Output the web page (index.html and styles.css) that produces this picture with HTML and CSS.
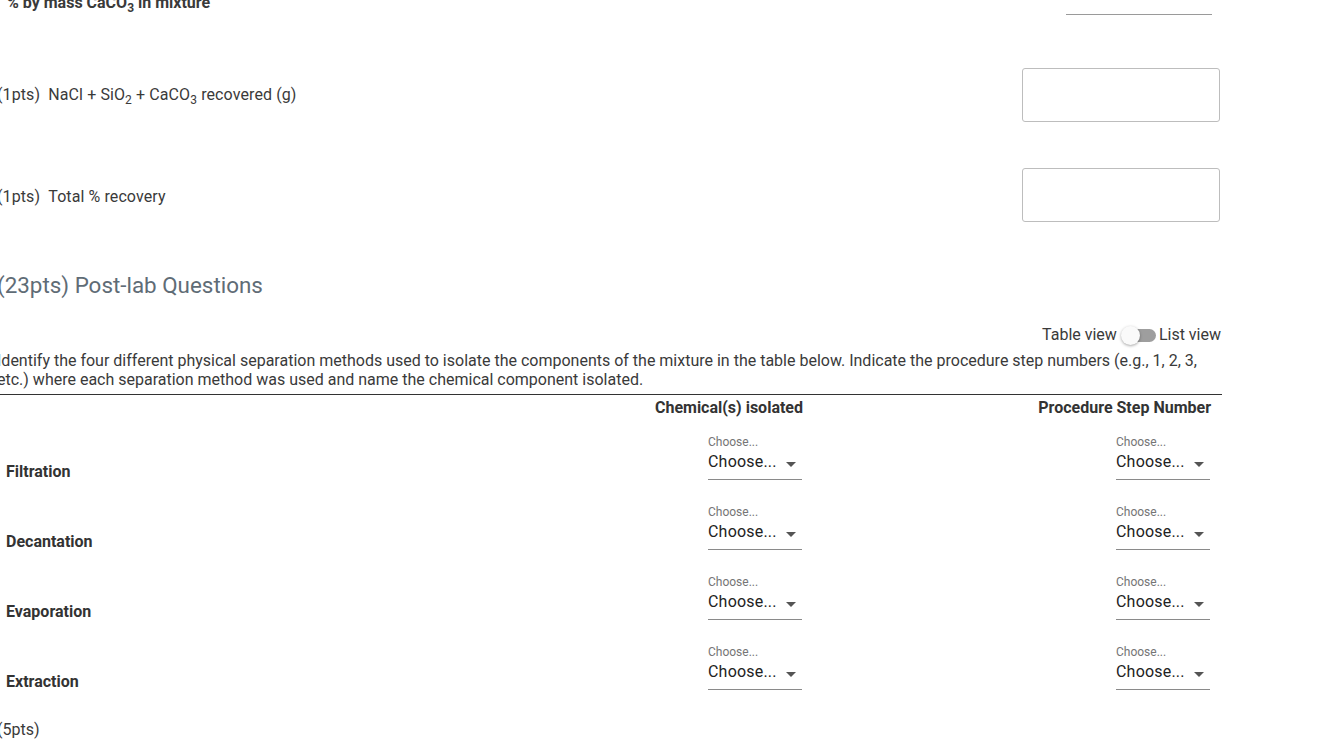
FILE: index.html
```html
<!DOCTYPE html>
<html>
	<head>
		<title>Post-lab</title>
		<link rel="stylesheet" href="styles.css">
	</head>
	<body>
		<div class="page">
			<div class="row row_top">
				<span class="lbl_bold">% by mass CaCO<sub>3</sub> in mixture</span>
				<span class="line_input"></span>
			</div>
			<div class="row row_q1">
				<span class="lbl">(1pts)&nbsp;&nbsp;NaCl + SiO<sub>2</sub> + CaCO<sub>3</sub> recovered (g)</span>
				<span class="box_input"></span>
			</div>
			<div class="row row_q2">
				<span class="lbl">(1pts)&nbsp;&nbsp;Total % recovery</span>
				<span class="box_input"></span>
			</div>

			<h2 class="tieu_de">(23pts) Post-lab Questions</h2>

			<div class="view_switch">
				<span>Table view</span>
				<span class="toggle"><span class="knob"></span></span>
				<span>List view</span>
			</div>

			<p class="cau_hoi">Identify the four different physical separation methods used to isolate the components of the mixture in the table below. Indicate the procedure step numbers (e.g., 1, 2, 3, etc.) where each separation method was used and name the chemical component isolated.</p>

			<div class="bang">
				<div class="th"></div>
				<div class="th c2">Chemical(s) isolated</div>
				<div class="th c3">Procedure Step Number</div>

				<div class="ten">Filtration</div>
				<div class="c2"><div class="chon"><span class="chon_nho">Choose...</span><span class="chon_gt">Choose...<i class="caret"></i></span></div></div>
				<div class="c3"><div class="chon"><span class="chon_nho">Choose...</span><span class="chon_gt">Choose...<i class="caret"></i></span></div></div>

				<div class="ten">Decantation</div>
				<div class="c2"><div class="chon"><span class="chon_nho">Choose...</span><span class="chon_gt">Choose...<i class="caret"></i></span></div></div>
				<div class="c3"><div class="chon"><span class="chon_nho">Choose...</span><span class="chon_gt">Choose...<i class="caret"></i></span></div></div>

				<div class="ten">Evaporation</div>
				<div class="c2"><div class="chon"><span class="chon_nho">Choose...</span><span class="chon_gt">Choose...<i class="caret"></i></span></div></div>
				<div class="c3"><div class="chon"><span class="chon_nho">Choose...</span><span class="chon_gt">Choose...<i class="caret"></i></span></div></div>

				<div class="ten">Extraction</div>
				<div class="c2"><div class="chon"><span class="chon_nho">Choose...</span><span class="chon_gt">Choose...<i class="caret"></i></span></div></div>
				<div class="c3"><div class="chon"><span class="chon_nho">Choose...</span><span class="chon_gt">Choose...<i class="caret"></i></span></div></div>
			</div>

			<p class="pts5">(5pts)</p>
		</div>
	</body>
</html>
```

FILE: styles.css
```css
html, body {
	margin: 0;
	background: #fff;
	overflow: hidden;
}
body {
	font-family: Roboto, "Liberation Sans", sans-serif;
	font-size: 16px;
	color: #3a3a3a;
}
.page {
	width: 1225px;
	margin: -7px 0 0 -3px;
}
.row {
	display: flex;
	justify-content: space-between;
	align-items: center;
}
sub {
	font-size: 12px;
	line-height: 0;
	vertical-align: -4px;
}
.lbl_bold {
	font-weight: bold;
	font-size: 16px;
	line-height: 20px;
	padding-left: 10px;
}
.row_top {
	align-items: flex-start;
}
.line_input {
	width: 146px;
	height: 21px;
	border-bottom: 1px solid #9a9a9a;
	margin-right: 10px;
}
.lbl {
	line-height: 20px;
	letter-spacing: 0.1px;
}
.row_q1 {
	margin-top: 53px;
}
.row_q2 {
	margin-top: 46px;
}
.row_q2 .lbl {
	padding-top: 3px;
}
.box_input {
	width: 196px;
	height: 52px;
	border: 1px solid #bdbdbd;
	border-radius: 3px;
	margin-right: 2px;
}
.tieu_de {
	margin: 49px 0 0 0;
	font-weight: normal;
	font-size: 22.4px;
	line-height: 28px;
	color: #5f6c76;
}
.view_switch {
	margin-top: 26px;
	display: flex;
	justify-content: flex-end;
	align-items: center;
	line-height: 20px;
	padding-right: 1px;
}
.toggle {
	position: relative;
	width: 28px;
	height: 13px;
	margin: 0 3px 0 11px;
	background: #9e9e9e;
	border-radius: 7px;
}
.knob {
	position: absolute;
	left: -7px;
	top: -3px;
	width: 19px;
	height: 19px;
	border-radius: 50%;
	background: #fafafa;
	box-shadow: 0 1px 3px rgba(0,0,0,0.35);
}
.cau_hoi {
	margin: 6px 0 0 0;
	line-height: 19px;
	padding-bottom: 5px;
	border-bottom: 1px solid #333;
	padding-right: 22px;
}
.bang {
	display: grid;
	grid-template-columns: 1fr 160px 408px;
	grid-template-rows: 40px repeat(4, 70px);
}
.th {
	font-weight: bold;
	font-size: 16px;
	line-height: 20px;
	padding-top: 3px;
	color: #333;
}
.c2 {
	justify-self: end;
	padding-right: 12px;
}
.c3 {
	justify-self: end;
	padding-right: 12px;
}
.th.c2 {
	padding-right: 11px;
}
.th.c3 {
	padding-right: 11px;
}
.ten {
	align-self: center;
	padding-left: 9px;
	padding-top: 2px;
	font-weight: bold;
	font-size: 16px;
	color: #333;
}
.chon {
	width: 94px;
	padding-top: 1px;
	padding-bottom: 7px;
	border-bottom: 1px solid #8a8a8a;
	display: flex;
	flex-direction: column;
}
.chon_nho {
	font-size: 12px;
	line-height: 13px;
	color: #757575;
}
.chon_gt {
	margin-top: 3px;
	font-size: 16px;
	line-height: 20px;
	color: #222;
	display: flex;
	align-items: center;
	letter-spacing: 0.2px;
}
.caret {
	width: 0;
	height: 0;
	margin: 5px 0 0 9px;
	border-left: 5px solid transparent;
	border-right: 5px solid transparent;
	border-top: 5px solid #555;
}
.pts5 {
	margin: 5px 0 0 0;
	line-height: 20px;
}
```
